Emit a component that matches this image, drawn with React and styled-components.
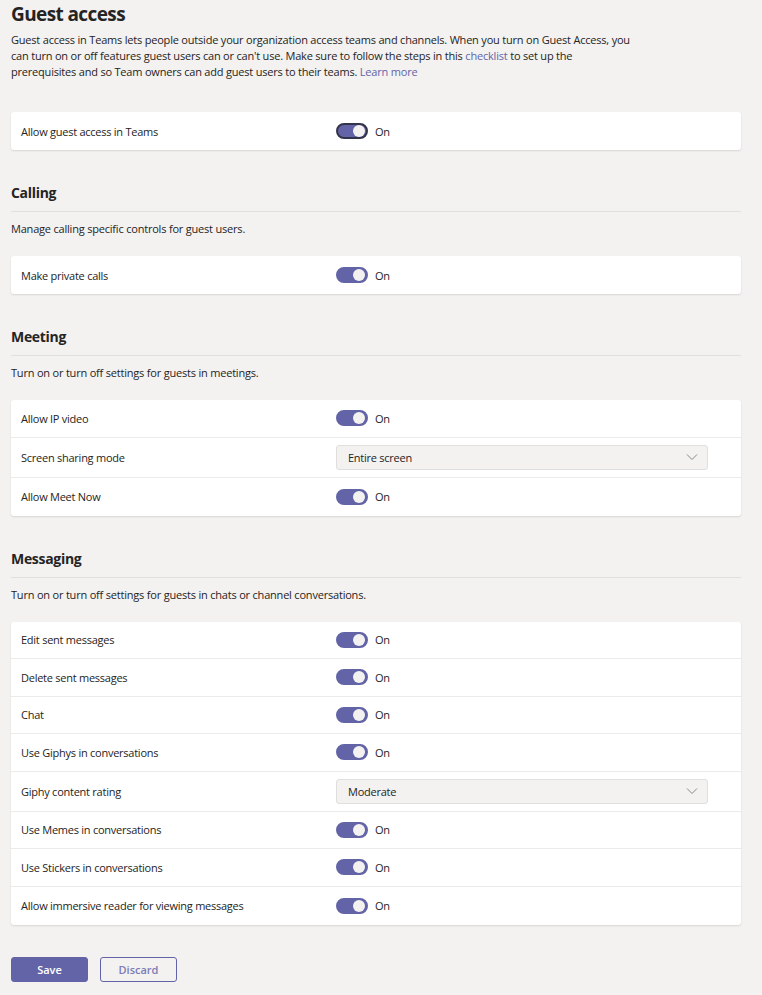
import React from "react";
import styled, { createGlobalStyle } from "styled-components";

const Global = createGlobalStyle`
  html, body { margin: 0; padding: 0; background: #f3f2f1; }
  body {
    font-family: "Open Sans", "Noto Sans", sans-serif;
    color: #252423;
    -webkit-font-smoothing: antialiased;
  }
`;

const Page = styled.main`
  width: 730px;
  padding: 0 0 12px 11px;
`;

const Title = styled.h1`
  margin: 0;
  font-size: 19px;
  line-height: 28px;
  font-weight: 700;
  letter-spacing: -0.6px;
`;

const Lead = styled.p`
  margin: 4px 0 32px;
  font-size: 11px;
  line-height: 16px;
  letter-spacing: -0.2px;
`;

const Link = styled.a`
  color: #6264a7;
  text-decoration: none;
`;

const Card = styled.section`
  background: #fff;
  border-radius: 3px;
  box-shadow: 0 1px 2px rgba(0, 0, 0, 0.12);
`;

const Row = styled.div`
  display: grid;
  grid-template-columns: 315px 1fr;
  align-items: center;
  height: ${(p) => (p.$tall ? "39px" : "36.5px")};
  padding: 0 33px 0 10px;
  font-size: 11px;
  letter-spacing: -0.25px;
  border-bottom: 1px solid #edebe9;
  &:last-child {
    border-bottom: none;
    height: ${(p) => (p.$tall ? "39px" : "38px")};
  }
`;

const ToggleWrap = styled.div`
  display: flex;
  align-items: center;
  gap: 7px;
`;

const Track = styled.span`
  box-sizing: border-box;
  width: 32px;
  height: 16px;
  border-radius: 8px;
  background: #6264a7;
  border: 2px solid ${(p) => (p.$focused ? "#33344a" : "#6264a7")};
  display: flex;
  align-items: center;
  justify-content: flex-end;
  padding-right: 1px;
`;

const Knob = styled.span`
  width: 12px;
  height: 12px;
  border-radius: 50%;
  background: #f3f2f1;
`;

const Select = styled.div`
  box-sizing: border-box;
  height: 25px;
  display: flex;
  align-items: center;
  justify-content: space-between;
  padding: 0 9px 0 11px;
  background: #f3f2f1;
  border: 1px solid #e1dfdd;
  border-radius: 3px;
  font-size: 11px;
`;

const Section = styled.section`
  margin-top: 33px;
`;

const SectionTitle = styled.h2`
  margin: 0;
  font-size: 14px;
  line-height: 20px;
  font-weight: 700;
  letter-spacing: -0.3px;
  padding-bottom: 8px;
  border-bottom: 1px solid #e1dfdd;
`;

const SectionNote = styled.p`
  margin: 9px 0 19px;
  font-size: 11px;
  line-height: 16px;
  letter-spacing: -0.2px;
`;

const Actions = styled.div`
  display: flex;
  gap: 12px;
  margin-top: 32px;
`;

const Button = styled.button`
  box-sizing: border-box;
  width: 77px;
  height: 25px;
  border-radius: 3px;
  font-family: inherit;
  font-size: 11px;
  font-weight: 600;
  cursor: pointer;
  background: ${(p) => (p.$primary ? "#6264a7" : "transparent")};
  color: ${(p) => (p.$primary ? "#fff" : "#7b7cb5")};
  border: 1px solid #6264a7;
`;

const Chevron = () => (
  <svg width="12" height="8" viewBox="0 0 12 8" fill="none">
    <path d="M1 1.5l5 5 5-5" stroke="#8a8886" strokeWidth="1" />
  </svg>
);

const Toggle = ({ focused }) => (
  <ToggleWrap>
    <Track $focused={focused}>
      <Knob />
    </Track>
    <span>On</span>
  </ToggleWrap>
);

const Setting = ({ label, kind = "toggle", value, focused }) => (
  <Row $tall={kind === "select"}>
    <span>{label}</span>
    {kind === "select" ? (
      <Select>
        <span>{value}</span>
        <Chevron />
      </Select>
    ) : (
      <Toggle focused={focused} />
    )}
  </Row>
);

const sections = [
  {
    title: "Calling",
    note: "Manage calling specific controls for guest users.",
    rows: [{ label: "Make private calls" }],
  },
  {
    title: "Meeting",
    note: "Turn on or turn off settings for guests in meetings.",
    rows: [
      { label: "Allow IP video" },
      { label: "Screen sharing mode", kind: "select", value: "Entire screen" },
      { label: "Allow Meet Now" },
    ],
  },
  {
    title: "Messaging",
    note: "Turn on or turn off settings for guests in chats or channel conversations.",
    rows: [
      { label: "Edit sent messages" },
      { label: "Delete sent messages" },
      { label: "Chat" },
      { label: "Use Giphys in conversations" },
      { label: "Giphy content rating", kind: "select", value: "Moderate" },
      { label: "Use Memes in conversations" },
      { label: "Use Stickers in conversations" },
      { label: "Allow immersive reader for viewing messages" },
    ],
  },
];

export default function App() {
  return (
    <Page>
      <Global />
      <Title>Guest access</Title>
      <Lead>
        Guest access in Teams lets people outside your organization access teams and channels. When you turn on Guest Access, you
        <br />
        can turn on or off features guest users can or can't use. Make sure to follow the steps in this{" "}
        <Link href="#">checklist</Link> to set up the
        <br />
        prerequisites and so Team owners can add guest users to their teams. <Link href="#">Learn more</Link>
      </Lead>
      <Card>
        <Setting label="Allow guest access in Teams" focused />
      </Card>
      {sections.map((s) => (
        <Section key={s.title}>
          <SectionTitle>{s.title}</SectionTitle>
          <SectionNote>{s.note}</SectionNote>
          <Card>
            {s.rows.map((r) => (
              <Setting key={r.label} {...r} />
            ))}
          </Card>
        </Section>
      ))}
      <Actions>
        <Button $primary>Save</Button>
        <Button>Discard</Button>
      </Actions>
    </Page>
  );
}
